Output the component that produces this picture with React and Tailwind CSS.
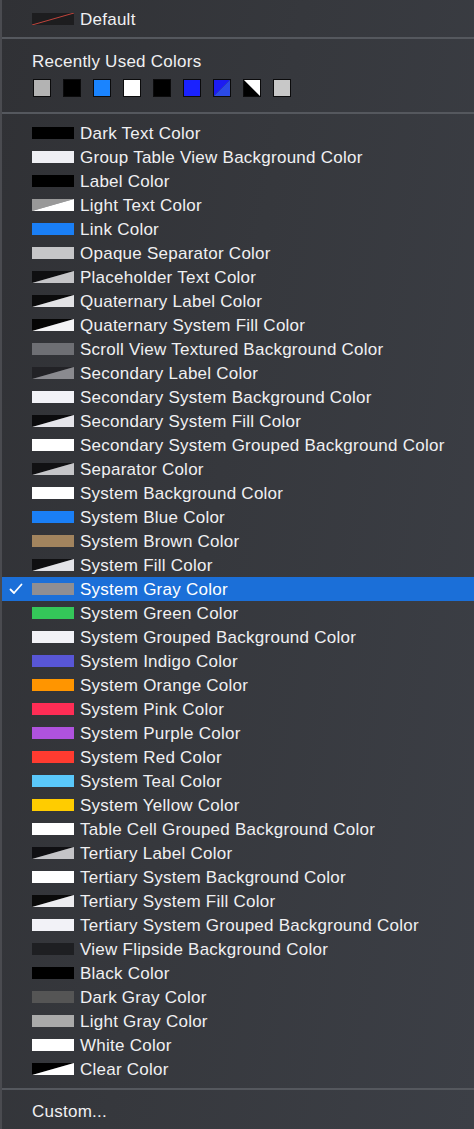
import React from 'react';

// solid: one fill; split: [over dark, over light] halves cut by the diagonal
const colors = [
  { name: 'Dark Text Color', fill: '#000000' },
  { name: 'Group Table View Background Color', fill: '#efeff4' },
  { name: 'Label Color', fill: '#000000' },
  { name: 'Light Text Color', split: ['#999999', '#ffffff'] },
  { name: 'Link Color', fill: '#1a7ff6' },
  { name: 'Opaque Separator Color', fill: '#c6c6c8' },
  { name: 'Placeholder Text Color', split: ['#0f0f11', '#c5c5c8'] },
  { name: 'Quaternary Label Color', split: ['#0b0b0c', '#e2e2e5'] },
  { name: 'Quaternary System Fill Color', split: ['#050505', '#f3f3f5'] },
  { name: 'Scroll View Textured Background Color', fill: '#6e6f74' },
  { name: 'Secondary Label Color', split: ['#222226', '#8a8a8f'] },
  { name: 'Secondary System Background Color', fill: '#f2f2f7' },
  { name: 'Secondary System Fill Color', split: ['#0b0b0d', '#e5e5ea'] },
  { name: 'Secondary System Grouped Background Color', fill: '#ffffff' },
  { name: 'Separator Color', split: ['#111113', '#c6c6c9'] },
  { name: 'System Background Color', fill: '#ffffff' },
  { name: 'System Blue Color', fill: '#1a7ff6' },
  { name: 'System Brown Color', fill: '#a2845e' },
  { name: 'System Fill Color', split: ['#0f0f11', '#e3e3e7'] },
  { name: 'System Gray Color', fill: '#8e8e93', selected: true },
  { name: 'System Green Color', fill: '#34c759' },
  { name: 'System Grouped Background Color', fill: '#f2f2f7' },
  { name: 'System Indigo Color', fill: '#5856d6' },
  { name: 'System Orange Color', fill: '#ff9500' },
  { name: 'System Pink Color', fill: '#ff2d55' },
  { name: 'System Purple Color', fill: '#af52de' },
  { name: 'System Red Color', fill: '#ff3b30' },
  { name: 'System Teal Color', fill: '#5ac8fa' },
  { name: 'System Yellow Color', fill: '#ffcc00' },
  { name: 'Table Cell Grouped Background Color', fill: '#ffffff' },
  { name: 'Tertiary Label Color', split: ['#0f0f12', '#c4c4c7'] },
  { name: 'Tertiary System Background Color', fill: '#ffffff' },
  { name: 'Tertiary System Fill Color', split: ['#0a0a0a', '#ececef'] },
  { name: 'Tertiary System Grouped Background Color', fill: '#f2f2f7' },
  { name: 'View Flipside Background Color', fill: '#1e1f22' },
  { name: 'Black Color', fill: '#000000' },
  { name: 'Dark Gray Color', fill: '#555555' },
  { name: 'Light Gray Color', fill: '#aaaaaa' },
  { name: 'White Color', fill: '#ffffff' },
  { name: 'Clear Color', split: ['#000000', '#ffffff'] },
];

const recent = [
  { fill: '#b3b3b3' },
  { fill: '#000000' },
  { fill: '#1a84ff' },
  { fill: '#ffffff' },
  { fill: '#000000' },
  { fill: '#1a22ff' },
  { split: ['#1c1cf2', '#2b4ae6'] },
  { split: ['#000000', '#ffffff'], flip: true },
  { fill: '#c8c8c8' },
];

function Swatch({ fill, split }) {
  return (
    <svg width="42" height="12" viewBox="0 0 42 12" className="shrink-0">
      {split ? (
        <>
          <polygon points="0,0 42,0 0,12" fill={split[0]} />
          <polygon points="42,0 42,12 0,12" fill={split[1]} />
        </>
      ) : (
        <rect width="42" height="12" fill={fill} />
      )}
    </svg>
  );
}

function RecentSwatch({ fill, split, flip }) {
  return (
    <div className="w-[18px] h-[18px] border border-[#0b0b0c] shrink-0">
      <svg width="16" height="16" viewBox="0 0 16 16" className="block">
        {split ? (
          flip ? (
            <>
              <polygon points="0,0 16,16 0,16" fill={split[0]} />
              <polygon points="0,0 16,0 16,16" fill={split[1]} />
            </>
          ) : (
            <>
              <polygon points="0,0 16,0 0,16" fill={split[0]} />
              <polygon points="16,0 16,16 0,16" fill={split[1]} />
            </>
          )
        ) : (
          <rect width="16" height="16" fill={fill} />
        )}
      </svg>
    </div>
  );
}

function Check() {
  return (
    <svg width="14" height="12" viewBox="0 0 14 12" className="shrink-0">
      <path d="M1.5 6.5 L5 10 L12.5 1.5" fill="none" stroke="#ffffff" strokeWidth="1.8" strokeLinecap="round" strokeLinejoin="round" />
    </svg>
  );
}

function Separator() {
  return <div className="h-[2px] bg-[#55585e]" />;
}

export default function App() {
  return (
    <div
      className="w-[474px] h-[1129px] overflow-hidden border-l-2 border-[#4a4b50] bg-[linear-gradient(100deg,#303135_0%,#36383d_45%,#3c3f46_100%)] text-[#f0f0f2] text-[17px] tracking-[0.25px] leading-none"
      style={{ fontFamily: '"Liberation Sans", Arial, sans-serif' }}
    >
      <div className="pt-[7px]">
        <div className="h-6 flex items-center pl-[30px]">
          <svg width="42" height="12" viewBox="0 0 42 12" className="shrink-0">
            <rect width="42" height="12" fill="#1d1d1f" />
            <line x1="0" y1="12" x2="42" y2="0" stroke="#c0443c" strokeWidth="1" />
          </svg>
          <span className="ml-[6px]">Default</span>
        </div>

        <div className="mt-[6px]">
          <Separator />
        </div>

        <div className="mt-[10px] h-6 flex items-center pl-[30px]">Recently Used Colors</div>
        <div className="mt-[6px] flex gap-[12px] pl-[31px]">
          {recent.map((c, i) => (
            <RecentSwatch key={i} {...c} />
          ))}
        </div>

        <div className="mt-[15px]">
          <Separator />
        </div>

        <div className="mt-[7px]">
          {colors.map((c) => (
            <div
              key={c.name}
              className={`h-6 flex items-center ${c.selected ? 'bg-[#1b6fd8] text-white' : ''}`}
            >
              <div className="w-[30px] flex justify-center pr-[2px]">
                {c.selected && <Check />}
              </div>
              <Swatch fill={c.fill} split={c.split} />
              <span className="ml-[6px] whitespace-nowrap">{c.name}</span>
            </div>
          ))}
        </div>

        <div className="mt-[7px]">
          <Separator />
        </div>

        <div className="mt-[9px] h-6 flex items-center pl-[30px]">Custom...</div>
      </div>
    </div>
  );
}
